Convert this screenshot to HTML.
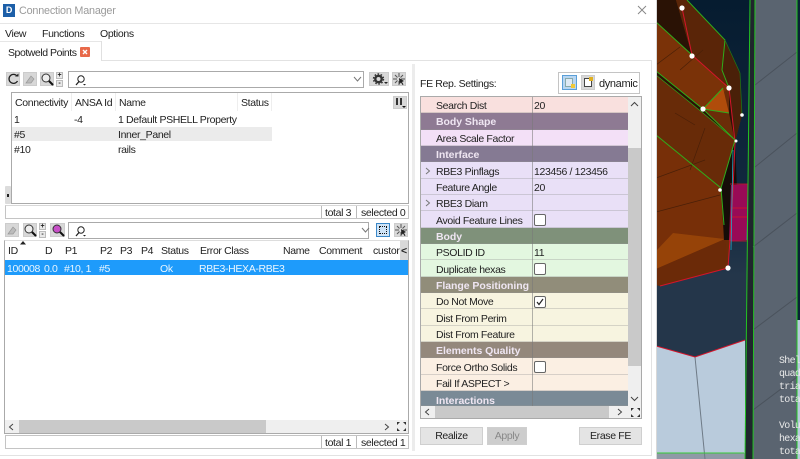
<!DOCTYPE html>
<html><head><meta charset="utf-8">
<style>
html,body{margin:0;padding:0;width:800px;height:459px;overflow:hidden;background:#fff}
body{position:relative;font-family:"Liberation Sans",sans-serif;font-size:10.5px;letter-spacing:-.35px;color:#222;filter:blur(.25px)}
.t,.b,svg.a{position:absolute}
.t{white-space:nowrap;line-height:12px;margin-top:1px}
.r{position:absolute;left:421px;width:207px;height:16.33px;box-shadow:inset 0 -1px 0 rgba(150,150,150,.35)}
.c{position:absolute;left:532px;top:97px;width:1px;height:309px;background:rgba(120,120,120,.55)}
.h{color:#efe6f2;font-weight:bold;letter-spacing:-.05px}
.btn{position:absolute;background:#e4e4e4;border:1px solid #cfcfcf;box-sizing:border-box;text-align:center;line-height:17px}
.ck{position:absolute;width:10px;height:10px;margin-top:1px;border:1px solid #666;background:#fff;border-radius:2px}
.ico{position:absolute;background:#d8d8d8;border:1px solid #ccc;box-sizing:border-box}
.pm{position:absolute;width:7px;height:7px;background:#e8e8e8;border:1px solid #bbb;box-sizing:border-box;font:bold 7px/5px "Liberation Sans",sans-serif;text-align:center;letter-spacing:0}
</style></head><body>

<!-- 3D scene -->
<svg class="a" style="left:656px;top:0" width="144" height="459" viewBox="656 0 144 459">
<defs><linearGradient id="n" x1="0" y1="0" x2="0" y2="1"><stop offset="0" stop-color="#061c30"/><stop offset=".45" stop-color="#12293f"/><stop offset=".6" stop-color="#24364a"/><stop offset="1" stop-color="#24364a"/></linearGradient></defs>
<rect x="656" y="0" width="144" height="459" fill="url(#n)"/>
<polygon points="797,0 800,0 800,320 797,320" fill="#0a2236"/>
<!-- orange body -->
<polygon points="656,0 687,0 725,40 740,73 742,115 735,142 735,185 728,268 660,286 656,285" fill="#6b2c08"/>
<polygon points="656,0 676,0 692,55 656,22" fill="#2a1205"/>
<polygon points="676,0 687,0 725,40 722,70 729,88 692,55" fill="#5a2508"/>
<polygon points="656,22 692,55 729,88 703,109 656,71" fill="#7a3208"/>
<polygon points="725,40 740,73 742,115 735,142 729,88 722,70" fill="#4a2008"/>
<polygon points="729,88 735,142 729,113" fill="#2a1205"/>
<polygon points="656,71 703,109 735,140 721,188 656,135" fill="#682b08"/>
<polygon points="723,88 703,109 729,113" fill="#b04c0b"/>
<polygon points="656,71 703,109 735,140 703,113 656,75" fill="#2a1205"/>
<polygon points="656,135 721,188 725,239 673,233 656,251" fill="#772f08"/>
<polygon points="656,251 673,233 725,239 656,269" fill="#964308"/>
<polygon points="656,269 725,239 728,268 660,286 656,285" fill="#6b2a08"/>
<polygon points="735,142 737,190 730,240 724,240 721,188" fill="#150c08"/>
<polygon points="731,185 750,184 750,240 729,241" fill="#980a56"/>
<path d="M656,65 L680,47 M680,70 L703,50 M656,178 L705,160 M656,212 L720,195 M675,113 L695,125 M705,128 L690,170" stroke="#4a2008" stroke-width=".7" fill="none"/>
<!-- lower light -->
<polygon points="656,346 695,357 745,340 745,459 656,459" fill="#b9cbdc"/>
<rect x="656" y="453" width="90" height="6" fill="#8f9aa6"/>
<polyline points="695,357 705,459" fill="none" stroke="#6e7a86" stroke-width="1"/>
<polyline points="656,346 695,357 745,340" fill="none" stroke="#d5142a" stroke-width="1"/>
<polyline points="660,286 728,268" fill="none" stroke="#d5142a" stroke-width="1"/>
<polyline points="682,8 692,55 729,88 735,142 733,190 730,240 728,268" fill="none" stroke="#d5142a" stroke-width="1"/>
<path d="M730,184h20M731,208h20M731,217h20M731,241h20" stroke="#d5142a" stroke-width=".7"/>
<polyline points="687,0 725,40 722,70 729,88" fill="none" stroke="#2fae1c" stroke-width="1"/>
<polyline points="725,40 740,73 742,115" fill="none" stroke="#1f7a14" stroke-width=".7"/>
<polyline points="656,22 692,55" fill="none" stroke="#2fae1c" stroke-width="1"/>
<polyline points="656,71 703,109 735,140 721,188 724,225" fill="none" stroke="#2fae1c" stroke-width="1"/>
<polyline points="656,75 703,113 735,140" fill="none" stroke="#2fae1c" stroke-width=".6"/>
<polyline points="723,88 703,109 729,113" fill="none" stroke="#2fae1c" stroke-width="1"/>
<polyline points="656,135 721,188" fill="none" stroke="#2fae1c" stroke-width="1"/>
<polyline points="656,453 744,453" fill="none" stroke="#35c935" stroke-width="1"/>
<line x1="733" y1="150" x2="731" y2="250" stroke="#1fa8c8" stroke-width=".8"/>
<line x1="748" y1="190" x2="747" y2="240" stroke="#1fa8c8" stroke-width=".8"/>
<!-- right panel -->
<polygon points="750,0 756,0 753,459 745,459" fill="#20262d"/>
<polygon points="755,0 797,0 797,459 753,459" fill="#5a6470"/>
<rect x="797" y="320" width="3" height="139" fill="#b9cbdc"/>
<polyline points="755,85 797,52" stroke="#4a525c" fill="none"/>
<polyline points="755,167 797,133" stroke="#4a525c" fill="none"/>
<polyline points="753,247 797,213" stroke="#4a525c" fill="none"/>
<polyline points="753,330 797,297" stroke="#4a525c" fill="none"/>
<polyline points="753,410 797,377" stroke="#4a525c" fill="none"/>
<line x1="750" y1="0" x2="745" y2="459" stroke="#22c322"/>
<line x1="755" y1="0" x2="753" y2="459" stroke="#22c322"/>
<line x1="797" y1="0" x2="797" y2="459" stroke="#22c322"/>
<g fill="#fff"><circle cx="682" cy="8" r="2.6"/><circle cx="692" cy="56" r="2.6"/><circle cx="729" cy="88" r="2.6"/><circle cx="703" cy="109" r="2.6"/><circle cx="742" cy="115" r="1.800"/><circle cx="736" cy="141" r="1.500"/><circle cx="720" cy="190" r="1.800"/><circle cx="728" cy="268" r="2.6"/></g>
</svg>
<div class="t" style="left:779px;top:354px;font:10px/13px 'Liberation Mono',monospace;letter-spacing:-.7px;color:#eaeaea;white-space:pre">Shel
quad
tria
tota

Volu
hexa
tota</div>

<!-- window -->
<div class="b" style="left:0;top:0;width:656px;height:459px;background:#fff"></div>
<div class="b" style="left:656px;top:0;width:1px;height:459px;background:#d8d8d8"></div>
<div class="b" style="left:3px;top:4px;width:12px;height:13px;background:#1c5fa8;color:#fff;font:bold 9px/13px 'Liberation Sans',sans-serif;text-align:center">D</div>
<div class="t" style="left:19px;top:4px;font-size:10.8px;letter-spacing:-.2px;color:#9a9a9a">Connection Manager</div>
<svg class="a" style="left:637px;top:5px" width="10" height="10"><path d="M1 1L9 9M9 1L1 9" stroke="#888" fill="none"/></svg>
<div class="b" style="left:0;top:23px;width:656px;height:1px;background:#e6e6e6"></div>
<div class="t" style="left:5px;top:27px">View</div>
<div class="t" style="left:42px;top:27px">Functions</div>
<div class="t" style="left:100px;top:27px">Options</div>
<!-- tab -->
<div class="b" style="left:102px;top:60px;width:550px;height:1px;background:#e2e2e2"></div>
<div class="b" style="left:0;top:41px;width:102px;height:1px;background:#e6e6e6"></div>
<div class="b" style="left:101px;top:41px;width:1px;height:20px;background:#e0e0e0"></div>
<div class="t" style="left:8px;top:46px;letter-spacing:-.45px">Spotweld Points</div>
<div class="b" style="left:80px;top:47px;width:10px;height:10px;background:#e8694a;border-radius:1px"></div>
<svg class="a" style="left:80px;top:47px" width="10" height="10"><path d="M3 3L7 7M7 3L3 7" stroke="#fff" stroke-width="1.4" fill="none"/></svg>
<div class="b" style="left:651px;top:60px;width:1px;height:395px;background:#e2e2e2"></div>
<div class="b" style="left:0;top:455px;width:652px;height:1px;background:#e2e2e2"></div>
<div class="b" style="left:412px;top:64px;width:3px;height:387px;background:#ececec"></div>

<!-- top toolbar -->
<div class="ico" style="left:6px;top:72px;width:14px;height:14px"></div>
<svg class="a" style="left:6px;top:72px" width="14" height="14"><path d="M11 4A4.5 4.5 0 1 0 11.5 9" stroke="#222" stroke-width="1.3" fill="none"/><path d="M9 4.5h3.5V1.5z" fill="#222"/></svg>
<div class="ico" style="left:23px;top:72px;width:14px;height:14px"></div>
<svg class="a" style="left:23px;top:72px" width="14" height="14"><path d="M3 11L8 4l3 3-3 4z" fill="#bbb" stroke="#999" stroke-width=".7"/></svg>
<div class="ico" style="left:40px;top:72px;width:14px;height:14px"></div>
<svg class="a" style="left:40px;top:72px" width="14" height="14"><circle cx="6" cy="6" r="4" fill="#eee" stroke="#333"/><path d="M9 9L13 13" stroke="#111" stroke-width="2"/></svg>
<div class="pm" style="left:56px;top:72px">+</div>
<div class="pm" style="left:56px;top:80px">-</div>
<div class="b" style="left:68px;top:71px;width:296px;height:17px;border:1px solid #aaa;box-sizing:border-box;background:#fff"></div>
<svg class="a" style="left:74px;top:73px" width="14" height="14"><circle cx="7" cy="6" r="3.2" fill="none" stroke="#222"/><path d="M5 8.5L2 12" stroke="#222" stroke-width="1.3"/><path d="M9 11h3l-1.5 1.5z" fill="#222"/></svg>
<svg class="a" style="left:353px;top:76px" width="9" height="7"><path d="M1 1L4.500 5L8 1" stroke="#777" fill="none"/></svg>
<div class="ico" style="left:369px;top:72px;width:20px;height:14px"></div>
<svg class="a" style="left:369px;top:72px" width="20" height="14"><circle cx="9.500" cy="7" r="3.200" fill="none" stroke="#333" stroke-width="2.400"/><circle cx="9.500" cy="7" r="5" fill="none" stroke="#333" stroke-width="1.400" stroke-dasharray="1.600 1.600"/><path d="M15 10h4l-2 2z" fill="#222"/></svg>
<div class="ico" style="left:392px;top:72px;width:14px;height:14px"></div>
<svg class="a" style="left:392px;top:72px" width="14" height="14"><path d="M7 1v4M7 9v4M1 7h4M9 7h4M3 3l2.500 2.500M11 3L8.500 5.500M3 11l2.500-2.500" stroke="#555" fill="none"/><path d="M7 6l5 3-2 1 1.500 2.500-1 .5L9 10.500 7.500 12z" fill="#222"/></svg>

<!-- table 1 -->
<div class="b" style="left:11px;top:92px;width:398px;height:112px;border:1px solid #aaa;box-sizing:border-box;background:#fff"></div>
<div class="b" style="left:12px;top:127px;width:260px;height:14px;background:#ebebeb"></div>
<div class="b" style="left:71px;top:93px;width:1px;height:18px;background:#eee"></div>
<div class="b" style="left:115px;top:93px;width:1px;height:18px;background:#eee"></div>
<div class="b" style="left:237px;top:93px;width:1px;height:18px;background:#eee"></div>
<div class="b" style="left:271px;top:93px;width:1px;height:18px;background:#eee"></div>
<div class="t" style="left:15px;top:96px">Connectivity</div>
<div class="t" style="left:75px;top:96px">ANSA Id</div>
<div class="t" style="left:119px;top:96px">Name</div>
<div class="t" style="left:241px;top:96px">Status</div>
<div class="t" style="left:14px;top:113px">1</div>
<div class="t" style="left:74px;top:113px">-4</div>
<div class="t" style="left:118px;top:113px">1 Default PSHELL Property</div>
<div class="t" style="left:14px;top:128px">#5</div>
<div class="t" style="left:118px;top:128px">Inner_Panel</div>
<div class="t" style="left:14px;top:143px">#10</div>
<div class="t" style="left:118px;top:143px">rails</div>
<div class="ico" style="left:393px;top:96px;width:14px;height:13px"></div>
<svg class="a" style="left:393px;top:96px" width="14" height="13"><path d="M3 2h2v7H3zM7 2h2v7H7z" fill="#333"/><path d="M9 10h4l-2 2z" fill="#111"/></svg>
<div class="b" style="left:5px;top:186px;width:6px;height:18px;background:#dcdcdc;border-radius:1px"></div>
<div class="b" style="left:7px;top:194px;width:2px;height:3px;background:#222"></div>
<!-- status 1 -->
<div class="b" style="left:5px;top:205px;width:404px;height:14px;border:1px solid #c4c4c4;border-top:1px solid #d8d8d8;box-sizing:border-box;background:#fff"></div>
<div class="b" style="left:321px;top:206px;width:1px;height:12px;background:#bbb"></div>
<div class="b" style="left:356px;top:206px;width:1px;height:12px;background:#bbb"></div>
<div class="t" style="left:325px;top:206px">total 3</div>
<div class="t" style="left:361px;top:206px">selected 0</div>

<!-- toolbar 2 -->
<div class="ico" style="left:5px;top:223px;width:14px;height:14px"></div>
<svg class="a" style="left:5px;top:223px" width="14" height="14"><path d="M3 11L8 4l3 3-3 4z" fill="#bbb" stroke="#999" stroke-width=".7"/></svg>
<div class="ico" style="left:23px;top:223px;width:14px;height:14px"></div>
<svg class="a" style="left:23px;top:223px" width="14" height="14"><circle cx="6" cy="6" r="4" fill="#eee" stroke="#333"/><path d="M9 9L13 13" stroke="#111" stroke-width="2"/></svg>
<div class="pm" style="left:39px;top:223px">+</div>
<div class="pm" style="left:39px;top:231px">-</div>
<div class="ico" style="left:50px;top:223px;width:15px;height:14px"></div>
<svg class="a" style="left:50px;top:223px" width="15" height="14"><circle cx="7" cy="6" r="4" fill="#c74fc7" stroke="#333"/><path d="M10 9L14 13" stroke="#111" stroke-width="2"/></svg>
<div class="b" style="left:68px;top:222px;width:301px;height:17px;border:1px solid #aaa;box-sizing:border-box;background:#fff"></div>
<svg class="a" style="left:74px;top:224px" width="14" height="14"><circle cx="7" cy="6" r="3.200" fill="none" stroke="#222"/><path d="M5 8.500L2 12" stroke="#222" stroke-width="1.300"/><path d="M9 11h3l-1.500 1.500z" fill="#222"/></svg>
<svg class="a" style="left:361px;top:227px" width="9" height="7"><path d="M1 1L4.500 5L8 1" stroke="#777" fill="none"/></svg>
<div class="ico" style="left:376px;top:223px;width:14px;height:14px;background:#cfe4f7;border-color:#3b88c8"></div>
<div class="b" style="left:379px;top:226px;width:8px;height:8px;border:1px dotted #111;box-sizing:border-box"></div>
<div class="ico" style="left:394px;top:223px;width:14px;height:14px"></div>
<svg class="a" style="left:394px;top:223px" width="14" height="14"><path d="M7 1v4M7 9v4M1 7h4M9 7h4M3 3l2.500 2.500M11 3L8.500 5.500M3 11l2.500-2.500" stroke="#555" fill="none"/><path d="M7 6l5 3-2 1 1.500 2.500-1 .5L9 10.500 7.500 12z" fill="#222"/></svg>

<!-- table 2 -->
<div class="b" style="left:4px;top:240px;width:405px;height:194px;border:1px solid #aaa;border-top:1px solid #ddd;box-sizing:border-box;background:#fff"></div>
<div class="b" style="left:5px;top:260px;width:403px;height:15px;background:#1e9bfb"></div>
<div class="t" style="left:8px;top:244px">ID</div>
<svg class="a" style="left:20px;top:241px" width="6" height="4"><path d="M0 3.500L3 0l3 3.500z" fill="#222"/></svg>
<div class="t" style="left:45px;top:244px">D</div>
<div class="t" style="left:65px;top:244px">P1</div>
<div class="t" style="left:100px;top:244px">P2</div>
<div class="t" style="left:120px;top:244px">P3</div>
<div class="t" style="left:141px;top:244px">P4</div>
<div class="t" style="left:161px;top:244px">Status</div>
<div class="t" style="left:200px;top:244px">Error Class</div>
<div class="t" style="left:283px;top:244px">Name</div>
<div class="t" style="left:319px;top:244px">Comment</div>
<div class="t" style="left:373px;top:244px">custor</div>
<div class="b" style="left:400px;top:241px;width:8px;height:19px;background:#d8d8d8"></div>
<div class="t" style="left:401px;top:244px;font-weight:bold">&lt;</div>
<div class="t" style="left:7px;top:262px;color:#eaf6ff">100008</div>
<div class="t" style="left:44px;top:262px;color:#eaf6ff">0.0</div>
<div class="t" style="left:64px;top:262px;color:#eaf6ff">#10, 1</div>
<div class="t" style="left:99px;top:262px;color:#eaf6ff">#5</div>
<div class="t" style="left:160px;top:262px;color:#eaf6ff">Ok</div>
<div class="t" style="left:199px;top:262px;color:#eaf6ff">RBE3-HEXA-RBE3</div>
<!-- h scroll -->
<div class="b" style="left:5px;top:420px;width:403px;height:13px;background:#efefef"></div>
<div class="b" style="left:19px;top:420px;width:247px;height:13px;background:#c9c9c9"></div>
<svg class="a" style="left:8px;top:423px" width="7" height="8"><path d="M5 1L1.500 4L5 7" stroke="#444" fill="none"/></svg>
<svg class="a" style="left:383px;top:423px" width="7" height="8"><path d="M2 1L5.500 4L2 7" stroke="#444" fill="none"/></svg>
<svg class="a" style="left:396px;top:421px" width="11" height="11"><path d="M1 1h3L1 4zM10 1H7l3 3zM1 10h3L1 7zM10 10H7l3-3z" fill="#333"/></svg>
<!-- status 2 -->
<div class="b" style="left:5px;top:435px;width:404px;height:14px;border:1px solid #c4c4c4;box-sizing:border-box;background:#fff"></div>
<div class="b" style="left:321px;top:436px;width:1px;height:12px;background:#bbb"></div>
<div class="b" style="left:356px;top:436px;width:1px;height:12px;background:#bbb"></div>
<div class="t" style="left:325px;top:436px">total 1</div>
<div class="t" style="left:361px;top:436px">selected 1</div>

<!-- FE panel -->
<div class="t" style="left:420px;top:77px">FE Rep. Settings:</div>
<div class="b" style="left:558px;top:72px;width:82px;height:22px;border:1px solid #c4c4c4;box-sizing:border-box;background:#fff"></div>
<div class="ico" style="left:562px;top:75px;width:15px;height:15px;background:#b8d6f2;border-color:#5a9fd8"></div>
<div class="b" style="left:565px;top:78px;width:8px;height:9px;background:#dfeaf5;border:1px solid #8aa;box-sizing:border-box"></div>
<div class="b" style="left:571px;top:84px;width:4px;height:4px;background:#f0c93a"></div>
<div class="ico" style="left:581px;top:75px;width:14px;height:15px"></div>
<div class="b" style="left:584px;top:78px;width:8px;height:9px;background:#fff;border:1px solid #444;box-sizing:border-box"></div>
<div class="b" style="left:589px;top:77px;width:4px;height:4px;background:#e0b020"></div>
<div class="t" style="left:599px;top:77px;font-size:11px">dynamic</div>

<div class="b" style="left:420px;top:96px;width:222px;height:323px;border:1px solid #aaa;box-sizing:border-box;background:#efefef"></div>
<div class="r" style="top:97px;background:#f9e0de"></div>
<div class="r" style="top:113.300px;background:#8e7a93"></div>
<div class="r" style="top:129.700px;background:#f3e0f7"></div>
<div class="r" style="top:146px;background:#857a93"></div>
<div class="r" style="top:162.300px;background:#e9e0f7"></div>
<div class="r" style="top:178.700px;background:#e9e0f7"></div>
<div class="r" style="top:195px;background:#e9e0f7"></div>
<div class="r" style="top:211.300px;background:#e9e0f7"></div>
<div class="r" style="top:227.700px;background:#7f917a"></div>
<div class="r" style="top:244px;background:#e3f7e0"></div>
<div class="r" style="top:260.300px;background:#e3f7e0"></div>
<div class="r" style="top:276.700px;background:#918d7a"></div>
<div class="r" style="top:293px;background:#f7f4e0"></div>
<div class="r" style="top:309.300px;background:#f7f4e0"></div>
<div class="r" style="top:325.700px;background:#f7f4e0"></div>
<div class="r" style="top:342px;background:#94887c"></div>
<div class="r" style="top:358.300px;background:#fbefe3"></div>
<div class="r" style="top:374.700px;background:#fbefe3"></div>
<div class="r" style="top:391px;height:15px;background:#7a8a96"></div>
<div class="c"></div>

<div class="t" style="left:436px;top:99px">Search Dist</div><div class="t" style="left:534px;top:99px">20</div>
<div class="t h" style="left:436px;top:115px">Body Shape</div>
<div class="t" style="left:436px;top:132px">Area Scale Factor</div>
<div class="t h" style="left:436px;top:148px">Interface</div>
<div class="t" style="left:436px;top:165px">RBE3 Pinflags</div><div class="t" style="left:534px;top:165px">123456 / 123456</div>
<div class="t" style="left:436px;top:181px">Feature Angle</div><div class="t" style="left:534px;top:181px">20</div>
<div class="t" style="left:436px;top:197px">RBE3 Diam</div>
<div class="t" style="left:436px;top:214px">Avoid Feature Lines</div><div class="ck" style="left:534px;top:213px"></div>
<div class="t h" style="left:436px;top:230px">Body</div>
<div class="t" style="left:436px;top:246px">PSOLID ID</div><div class="t" style="left:534px;top:246px">11</div>
<div class="t" style="left:436px;top:263px">Duplicate hexas</div><div class="ck" style="left:534px;top:262px"></div>
<div class="t h" style="left:436px;top:279px">Flange Positioning</div>
<div class="t" style="left:436px;top:295px">Do Not Move</div><div class="ck" style="left:534px;top:295px"></div>
<svg class="a" style="left:534px;top:296px" width="12" height="12"><path d="M3 6l2 2.500L9 3" stroke="#222" stroke-width="1.200" fill="none"/></svg>
<div class="t" style="left:436px;top:312px">Dist From Perim</div>
<div class="t" style="left:436px;top:328px">Dist From Feature</div>
<div class="t h" style="left:436px;top:344px">Elements Quality</div>
<div class="t" style="left:436px;top:361px">Force Ortho Solids</div><div class="ck" style="left:534px;top:360px"></div>
<div class="t" style="left:436px;top:377px">Fail If ASPECT &gt;</div>
<div class="t h" style="left:436px;top:394px">Interactions</div>
<svg class="a" style="left:425px;top:167px" width="6" height="8"><path d="M1 1L4.500 4L1 7" stroke="#777" fill="none"/></svg>
<svg class="a" style="left:425px;top:199px" width="6" height="8"><path d="M1 1L4.500 4L1 7" stroke="#777" fill="none"/></svg>

<!-- FE scrollbars -->
<div class="b" style="left:628px;top:148px;width:13px;height:218px;background:#c9c9c9"></div>
<svg class="a" style="left:630px;top:101px" width="9" height="6"><path d="M1 5L4.500 1.500L8 5" stroke="#444" fill="none"/></svg>
<svg class="a" style="left:630px;top:396px" width="9" height="6"><path d="M1 1L4.500 4.500L8 1" stroke="#444" fill="none"/></svg>
<div class="b" style="left:435px;top:406px;width:174px;height:12px;background:#c9c9c9"></div>
<svg class="a" style="left:424px;top:408px" width="7" height="8"><path d="M5 1L1.500 4L5 7" stroke="#444" fill="none"/></svg>
<svg class="a" style="left:616px;top:408px" width="7" height="8"><path d="M2 1L5.500 4L2 7" stroke="#444" fill="none"/></svg>
<svg class="a" style="left:630px;top:407px" width="11" height="11"><path d="M1 1h3L1 4zM10 1H7l3 3zM1 10h3L1 7zM10 10H7l3-3z" fill="#333"/></svg>

<!-- buttons -->
<div class="btn" style="left:420px;top:427px;width:63px;height:18px">Realize</div>
<div class="btn" style="left:487px;top:427px;width:40px;height:18px;background:#cdcdcd;color:#888">Apply</div>
<div class="btn" style="left:579px;top:427px;width:63px;height:18px">Erase FE</div>
</body></html>
